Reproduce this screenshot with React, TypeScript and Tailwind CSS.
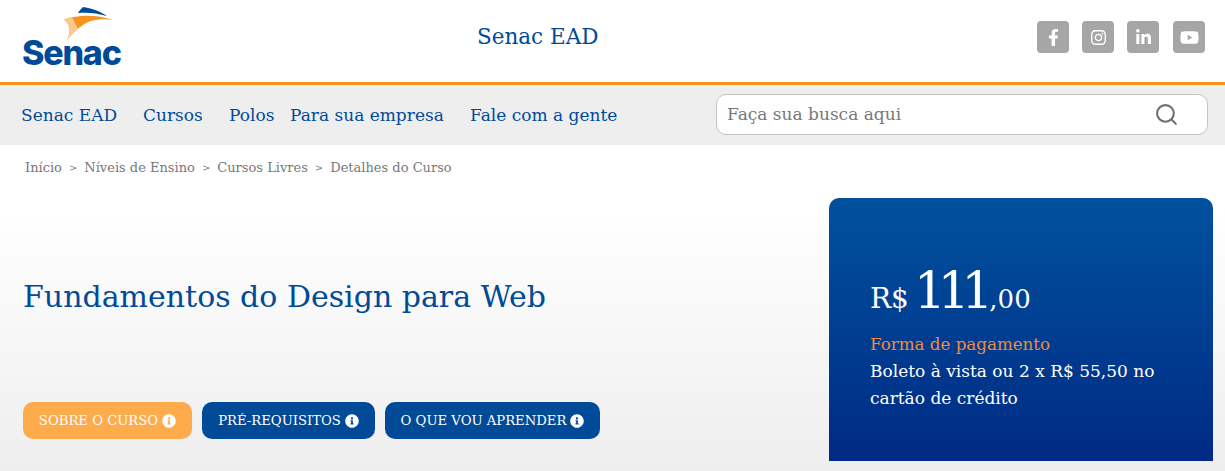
import React from 'react';
import { Search } from 'lucide-react';
import { FaFacebookF, FaInstagram, FaLinkedinIn, FaYoutube, FaInfoCircle } from 'react-icons/fa';

const slab = "font-['DejaVu_Serif',serif]";

export default function App() {
  return (
    <div className={`${slab} h-[471px] overflow-hidden bg-white`}>
      {/* Header */}
      <header className="flex h-[85px] items-start border-b-[3px] border-[#f7931e] bg-white">
        <div className="w-[477px] pl-[22px]">
          <div className="relative h-[70px] w-[100px]">
            {/* swoosh, drawn in page coordinates minus the 22px offset */}
            <svg viewBox="22 0 100 42" className="absolute left-0 top-0 h-[42px] w-[100px]">
              <path d="M78 13 C79 11 81 9 83 7 C91 8 100 11 107 16 C97 13 87 12 78 13Z" fill="#004a98" />
              <path d="M64 19.5 C80 14 98 15 113 20 C100 18 90 20 83 25 C77 29 71 35 67 40 C71 32 71 26 64 19.5Z" fill="#f7931e" />
              <path d="M64 19.5 L72 17 C74 21 76 25 78 29 C74 32 70 36 67 40 C71 32 71 26 64 19.5Z" fill="#fbc98a" />
            </svg>
            <span className="absolute left-0 top-[36px] font-['Inter',sans-serif] text-[34px] font-extrabold leading-[34px] tracking-[-1.2px] text-[#004a98]">
              Senac
            </span>
          </div>
        </div>
        <div className="pt-[23px] text-[21.5px] leading-[28px] text-[#004a98]">Senac EAD</div>
        <div className="ml-auto flex pr-[20px] pt-[21px]">
          <a className="flex h-[32px] w-[32px] items-center justify-center rounded bg-[#a6a6a6] text-[17px] text-white"><FaFacebookF /></a>
          <a className="ml-[13px] flex h-[32px] w-[32px] items-center justify-center rounded bg-[#a6a6a6] text-[17px] text-white"><FaInstagram /></a>
          <a className="ml-[13px] flex h-[32px] w-[32px] items-center justify-center rounded bg-[#a6a6a6] text-[17px] text-white"><FaLinkedinIn /></a>
          <a className="ml-[14px] flex h-[32px] w-[32px] items-center justify-center rounded bg-[#a6a6a6] text-[19px] text-white"><FaYoutube /></a>
        </div>
      </header>

      {/* Nav */}
      <nav className="flex h-[60px] items-center bg-[#eeeeee] pl-[21px] pr-[17px] pt-[2px] text-[17px] text-[#004a98]">
        <a className="w-[122px]">Senac EAD</a>
        <a className="w-[86px]">Cursos</a>
        <a className="w-[61px]">Polos</a>
        <a className="w-[180px]">Para sua empresa</a>
        <a>Fale com a gente</a>
        <div className="mb-[4px] ml-auto flex h-[41px] w-[492px] items-center justify-between rounded-[10px] border border-[#c4c4c4] bg-white pl-[10px] pr-[28px] text-[#77787b]">
          <span className="mt-[2px]">Faça sua busca aqui</span>
          <Search size={25} strokeWidth={2} className="text-[#6f6f6f]" />
        </div>
      </nav>

      {/* Main */}
      <main className="flex h-[326px] bg-gradient-to-b from-white from-[20%] to-[#eeeeee]">
        <div className="flex w-[829px] flex-col pl-[25px]">
          <div className="flex items-center gap-[7px] pt-[14px] text-[13px] leading-[18px] text-[#77787b]">
            <span>Início</span><span className="text-[10px]">&gt;</span>
            <span>Níveis de Ensino</span><span className="text-[10px]">&gt;</span>
            <span>Cursos Livres</span><span className="text-[10px]">&gt;</span>
            <span>Detalhes do Curso</span>
          </div>
          <h1 className="-ml-[2px] pt-[100px] text-[30px] font-normal leading-[40px] text-[#004a98]">Fundamentos do Design para Web</h1>
          <div className="-ml-[2px] mt-[85px] flex gap-[10px] text-[13.2px] text-white">
            <a className="flex h-[37px] w-[169px] items-center justify-center gap-[4px] rounded-[10px] bg-[#fdab4b]">SOBRE O CURSO <FaInfoCircle className="text-[14px]" /></a>
            <a className="flex h-[37px] w-[173px] items-center justify-center gap-[4px] rounded-[10px] bg-[#004a98]">PRÉ-REQUISITOS <FaInfoCircle className="text-[14px]" /></a>
            <a className="flex h-[37px] w-[215px] items-center justify-center gap-[4px] rounded-[10px] bg-[#004a98]">O QUE VOU APRENDER <FaInfoCircle className="text-[14px]" /></a>
          </div>
        </div>

        <aside className="mt-[53px] h-[263px] w-[384px] rounded-t-[10px] bg-gradient-to-b from-[#00519e] to-[#002a85] pl-[41px] pt-[63px] text-white">
          <div className="flex items-baseline text-[28px] leading-[60px]">
            <span className="mr-[5px]">R$</span>
            <span className="text-[50px] tracking-[-8px]">111</span>
            <span className="ml-[4px] text-[26px]">,00</span>
          </div>
          <div className="mt-[2px] text-[16.7px] leading-[27px] text-[#f08a3c]">Forma de pagamento</div>
          <div className="w-[310px] text-[17px] leading-[27px]">Boleto à vista ou 2 x R$ 55,50 no cartão de crédito</div>
        </aside>
      </main>
    </div>
  );
}
